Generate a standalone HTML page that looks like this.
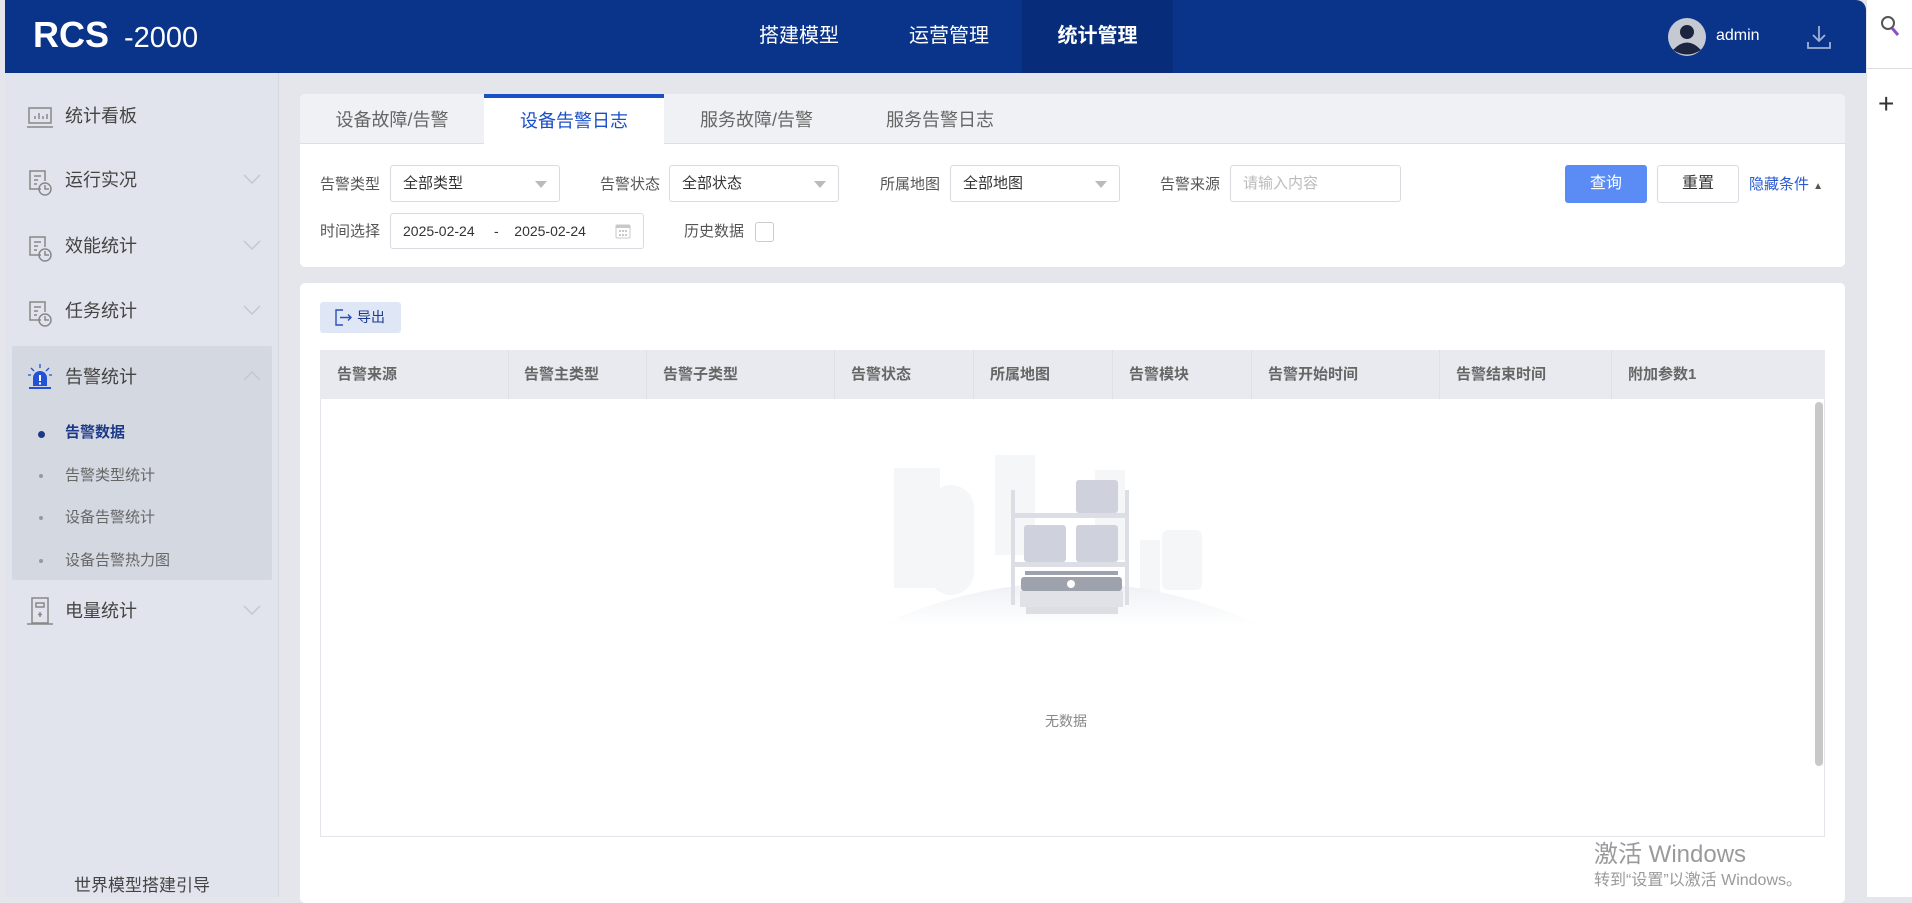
<!DOCTYPE html>
<html><head><meta charset="utf-8">
<style>
*{margin:0;padding:0;box-sizing:border-box}
body{width:1912px;height:897px;overflow:hidden;background:#e4e6ec;font-family:"Liberation Sans","Noto Sans CJK SC",sans-serif;position:relative;color:#333}
.abs{position:absolute}
#hdr{left:5px;top:0;width:1861px;height:73px;background:#0a3489;border-top-right-radius:10px}
#rs{left:1866px;top:0;width:46px;height:897px;background:#fff;border-left:1px solid #e5e5e5}
.nav{top:0;height:73px;line-height:73px;color:#fff;font-size:20px}
#side{left:5px;top:73px;width:274px;height:824px;background:#e1e4ec;border-right:1px solid #d4d7df}
.mi{left:0;width:274px;height:40px;line-height:40px;font-size:18px;color:#444}
.mi .t{position:absolute;left:60px}
.mi svg.ic{position:absolute;left:22px;top:9px}
.chev{position:absolute;left:238px;top:13px}
.sub{left:60px;font-size:15px;color:#666}
.dot{width:5px;height:5px;background:#999;border-radius:50%}
.card{background:#fff;border-radius:5px}
.tab{top:94px;height:50px;line-height:52px;font-size:18px;color:#666;text-align:center}
.lbl{font-size:15px;color:#555}
.sel{height:37px;border:1px solid #d8dbe0;border-radius:3px;background:#fff;font-size:15px;color:#333;line-height:35px;padding-left:12px}
.sel .ar{position:absolute;right:12px;top:15px;width:0;height:0;border-left:6px solid transparent;border-right:6px solid transparent;border-top:7px solid #bbb}
.th{top:350px;height:49px;line-height:49px;font-size:15px;color:#666;font-weight:bold}
.sep{top:350px;width:1px;height:49px;background:#dde0e5}
</style></head><body>
<div id="hdr" class="abs"></div>
<div class="abs" style="left:33px;top:14px;color:#fff;font-size:36px;font-weight:bold;letter-spacing:0">RCS</div>
<div class="abs" style="left:124px;top:22px;color:#fff;font-size:29px">-2000</div>
<div class="abs nav" style="left:759px">搭建模型</div>
<div class="abs nav" style="left:909px">运营管理</div>
<div class="abs nav" style="left:1022px;width:151px;background:#072d7a;text-align:center;font-weight:bold">统计管理</div>
<svg class="abs" style="left:1667px;top:17px" width="40" height="40" viewBox="0 0 40 40"><circle cx="20" cy="20" r="19" fill="#c5c9d2"/><circle cx="20" cy="15" r="7" fill="#1d2440"/><path d="M6 33 Q20 18 34 33 Q20 42 6 33Z" fill="#1d2440"/></svg>
<div class="abs" style="left:1716px;top:27px;color:#fff;font-size:16px">admin</div>
<svg class="abs" style="left:1806px;top:24px" width="26" height="26" viewBox="0 0 26 26" fill="none" stroke="#9fb0d6" stroke-width="1.8"><path d="M13 2V16M7 11L13 17L19 11M2 18V24H24V18"/></svg>
<div id="rs" class="abs"></div>
<svg class="abs" style="left:1880px;top:14px" width="22" height="24" viewBox="0 0 22 24" fill="none" stroke="#555" stroke-width="2"><circle cx="8" cy="9" r="6"/><path d="M12 14L18 21" stroke="#8a4fc9" stroke-width="3"/></svg>
<div class="abs" style="left:1866px;top:68px;width:46px;height:1px;background:#ddd"></div>
<div class="abs" style="left:1878px;top:88px;font-size:28px;color:#333;font-weight:300">+</div>

<div id="side" class="abs">
 <div class="abs mi" style="top:23px"><svg class="ic" width="26" height="24" viewBox="0 0 26 24" fill="none" stroke="#888" stroke-width="1.5"><rect x="2" y="3" width="22" height="15"/><path d="M0 22H26M8 14V11M12 14V8M16 14V11M20 14V9"/></svg><span class="t">统计看板</span></div>
 <div class="abs mi" style="top:87px"><svg class="ic" width="26" height="28" viewBox="0 0 26 28" fill="none" stroke="#888" stroke-width="1.5"><path d="M14 20H3V2H18V12M7 7H14M7 11H11M7 15H10"/><circle cx="18" cy="20" r="6"/><path d="M18 16V20H22"/></svg><span class="t">运行实况</span><svg class="chev" width="18" height="12" viewBox="0 0 18 12" fill="none" stroke="#c4c7cf" stroke-width="1.5"><path d="M1 2L9 10L17 2"/></svg></div>
 <div class="abs mi" style="top:153px"><svg class="ic" width="26" height="28" viewBox="0 0 26 28" fill="none" stroke="#888" stroke-width="1.5"><path d="M14 20H3V2H18V12M7 7H14M7 11H11M7 15H10"/><circle cx="18" cy="20" r="6"/><path d="M18 16V20H22"/></svg><span class="t">效能统计</span><svg class="chev" width="18" height="12" viewBox="0 0 18 12" fill="none" stroke="#c4c7cf" stroke-width="1.5"><path d="M1 2L9 10L17 2"/></svg></div>
 <div class="abs mi" style="top:218px"><svg class="ic" width="26" height="28" viewBox="0 0 26 28" fill="none" stroke="#888" stroke-width="1.5"><path d="M14 20H3V2H18V12M7 7H14M7 11H11M7 15H10"/><circle cx="18" cy="20" r="6"/><path d="M18 16V20H22"/></svg><span class="t">任务统计</span><svg class="chev" width="18" height="12" viewBox="0 0 18 12" fill="none" stroke="#c4c7cf" stroke-width="1.5"><path d="M1 2L9 10L17 2"/></svg></div>
 <div class="abs" style="left:7px;top:273px;width:260px;height:234px;background:#d4d8e1;border-radius:2px"></div>
 <div class="abs mi" style="top:284px"><svg class="ic" width="26" height="30" viewBox="0 0 26 30" style="top:5px"><path d="M6 24V16A7 7 0 0 1 20 16V24Z" fill="#2452d6"/><rect x="2" y="25" width="22" height="2" fill="#2452d6"/><rect x="12" y="13" width="2" height="6" fill="#fff"/><rect x="12" y="20.5" width="2" height="2" fill="#fff"/><path d="M13 2V6M4 6L7 9M22 6L19 9M1 13H4M22 13H25" stroke="#2452d6" stroke-width="1.3"/></svg><span class="t">告警统计</span><svg class="chev" width="18" height="12" viewBox="0 0 18 12" fill="none" stroke="#c4c7cf" stroke-width="1.5"><path d="M1 10L9 2L17 10"/></svg></div>
 <div class="abs dot" style="left:33px;top:358px;width:7px;height:7px;background:#1d3a8a"></div>
 <div class="abs sub" style="top:348px;color:#1d3a8a;font-weight:bold">告警数据</div>
 <div class="abs dot" style="left:34px;top:401px;width:4px;height:4px"></div>
 <div class="abs sub" style="top:391px">告警类型统计</div>
 <div class="abs dot" style="left:34px;top:443px;width:4px;height:4px"></div>
 <div class="abs sub" style="top:433px">设备告警统计</div>
 <div class="abs dot" style="left:34px;top:486px;width:4px;height:4px"></div>
 <div class="abs sub" style="top:476px">设备告警热力图</div>
 <div class="abs mi" style="top:518px"><svg class="ic" width="26" height="30" viewBox="0 0 26 30" fill="none" stroke="#888" stroke-width="1.5" style="top:5px"><rect x="5" y="2" width="16" height="25"/><path d="M0 28H26M9 7H17V11H9ZM13 16V21M11 18.5H15"/></svg><span class="t">电量统计</span><svg class="chev" width="18" height="12" viewBox="0 0 18 12" fill="none" stroke="#c4c7cf" stroke-width="1.5"><path d="M1 2L9 10L17 2"/></svg></div>
 <div class="abs" style="left:0;width:274px;top:798px;text-align:center;font-size:17px;color:#444">世界模型搭建引导</div>
</div>

<!-- card1 -->
<div class="abs card" style="left:300px;top:94px;width:1545px;height:173px"></div>
<div class="abs" style="left:300px;top:94px;width:1545px;height:50px;background:#f0f1f4;border-bottom:1px solid #dcdfe5;border-radius:5px 5px 0 0"></div>
<div class="abs tab" style="left:300px;width:184px">设备故障/告警</div>
<div class="abs tab" style="left:484px;width:180px;background:#fff;border-top:4px solid #1a4fc7;line-height:46px;color:#1a4fc7;height:51px">设备告警日志</div>
<div class="abs tab" style="left:664px;width:185px">服务故障/告警</div>
<div class="abs tab" style="left:849px;width:182px">服务告警日志</div>

<div class="abs lbl" style="left:320px;top:173px">告警类型</div>
<div class="abs sel" style="left:390px;top:165px;width:170px">全部类型<span class="ar"></span></div>
<div class="abs lbl" style="left:600px;top:173px">告警状态</div>
<div class="abs sel" style="left:669px;top:165px;width:170px">全部状态<span class="ar"></span></div>
<div class="abs lbl" style="left:880px;top:173px">所属地图</div>
<div class="abs sel" style="left:950px;top:165px;width:170px">全部地图<span class="ar"></span></div>
<div class="abs lbl" style="left:1160px;top:173px">告警来源</div>
<div class="abs sel" style="left:1230px;top:165px;width:171px;color:#bbb">请输入内容</div>
<div class="abs" style="left:1565px;top:165px;width:82px;height:38px;background:#5b8cf5;border-radius:3px;color:#fff;font-size:16px;text-align:center;line-height:38px">查询</div>
<div class="abs" style="left:1657px;top:165px;width:82px;height:38px;background:#fff;border:1px solid #d8dbe0;border-radius:3px;color:#333;font-size:16px;text-align:center;line-height:36px">重置</div>
<div class="abs" style="left:1749px;top:173px;color:#2a5bd0;font-size:15px">隐藏条件 <span style="font-size:10px;color:#555">▲</span></div>

<div class="abs lbl" style="left:320px;top:220px">时间选择</div>
<div class="abs sel" style="left:390px;top:213px;width:254px;height:36px;line-height:34px;font-size:14px">2025-02-24&nbsp;&nbsp;&nbsp;&nbsp;&nbsp;-&nbsp;&nbsp;&nbsp;&nbsp;2025-02-24
<svg class="abs" style="right:12px;top:9px" width="16" height="16" viewBox="0 0 16 16" fill="#c8c8c8"><rect x="1" y="2" width="14" height="13" rx="1" fill="none" stroke="#c8c8c8"/><rect x="1" y="2" width="14" height="3"/><rect x="4" y="7" width="2" height="2"/><rect x="7" y="7" width="2" height="2"/><rect x="10" y="7" width="2" height="2"/><rect x="4" y="11" width="2" height="2"/><rect x="7" y="11" width="2" height="2"/><rect x="10" y="11" width="2" height="2"/></svg></div>
<div class="abs lbl" style="left:684px;top:220px">历史数据</div>
<div class="abs" style="left:755px;top:222px;width:19px;height:20px;border:1px solid #ccc;border-radius:3px;background:#fff"></div>

<!-- card2 -->
<div class="abs card" style="left:300px;top:283px;width:1545px;height:620px"></div>
<div class="abs" style="left:320px;top:302px;width:81px;height:31px;background:#dfe7f7;border-radius:3px;color:#1d3a8a;font-size:14px;line-height:31px;padding-left:37px">导出</div>
<svg class="abs" style="left:335px;top:309px" width="18" height="17" viewBox="0 0 18 17" fill="none" stroke="#2a4fb8" stroke-width="1.4"><path d="M8 1H1V16H8M5 8.5H16M13 5.5L16 8.5L13 11.5"/></svg>
<div class="abs" style="left:320px;top:350px;width:1505px;height:487px;border:1px solid #e3e5ea"></div>
<div class="abs" style="left:320px;top:350px;width:1505px;height:49px;background:#e8eaef"></div>
<div class="abs th" style="left:337px">告警来源</div>
<div class="abs th" style="left:524px">告警主类型</div>
<div class="abs th" style="left:663px">告警子类型</div>
<div class="abs th" style="left:851px">告警状态</div>
<div class="abs th" style="left:990px">所属地图</div>
<div class="abs th" style="left:1129px">告警模块</div>
<div class="abs th" style="left:1268px">告警开始时间</div>
<div class="abs th" style="left:1456px">告警结束时间</div>
<div class="abs th" style="left:1628px">附加参数1</div>
<div class="abs sep" style="left:508px"></div><div class="abs sep" style="left:646px"></div><div class="abs sep" style="left:834px"></div><div class="abs sep" style="left:973px"></div><div class="abs sep" style="left:1112px"></div><div class="abs sep" style="left:1251px"></div><div class="abs sep" style="left:1439px"></div><div class="abs sep" style="left:1611px"></div>
<div class="abs" style="left:1815px;top:402px;width:8px;height:364px;background:#c8c8c8;border-radius:4px"></div>

<svg class="abs" style="left:860px;top:410px" width="420" height="230" viewBox="0 0 420 230">
<defs><linearGradient id="g" x1="0" y1="0" x2="0" y2="1"><stop offset="0" stop-color="#eef0f4"/><stop offset="1" stop-color="#fff"/></linearGradient></defs>
<g fill="#f5f6f8"><rect x="34" y="58" width="46" height="120"/><rect x="68" y="75" width="46" height="110" rx="23"/><rect x="135" y="45" width="40" height="100"/><rect x="235" y="60" width="30" height="90"/><rect x="280" y="130" width="20" height="60"/><rect x="302" y="120" width="40" height="60" rx="6"/></g>
<path d="M20 215 Q210 130 400 215Z" fill="url(#g)"/>
<g fill="#dcdee6"><rect x="151" y="80" width="4" height="115"/><rect x="265" y="80" width="4" height="115"/><rect x="151" y="103" width="118" height="5"/><rect x="151" y="152" width="118" height="5"/></g>
<g fill="#cfd2dc"><rect x="216" y="70" width="42" height="33" rx="3"/><rect x="164" y="115" width="42" height="37" rx="3"/><rect x="216" y="115" width="42" height="37" rx="3"/></g>
<rect x="165" y="161" width="93" height="4" fill="#9ea2ad"/>
<rect x="161" y="167" width="101" height="14" rx="3" fill="#9ea2ad"/>
<circle cx="211" cy="174" r="4" fill="#fff"/>
<rect x="160" y="181" width="103" height="16" fill="#e0e2e8"/>
<rect x="166" y="197" width="92" height="7" fill="#dcdee4"/>
</svg>
<div class="abs" style="left:1045px;top:711px;font-size:14px;color:#888">无数据</div>

<div class="abs" style="left:1594px;top:834px;font-size:24px;color:#9a9a9a">激活 Windows</div>
<div class="abs" style="left:1594px;top:866px;font-size:16px;color:#9a9a9a">转到“设置”以激活 Windows。</div>
</body></html>
